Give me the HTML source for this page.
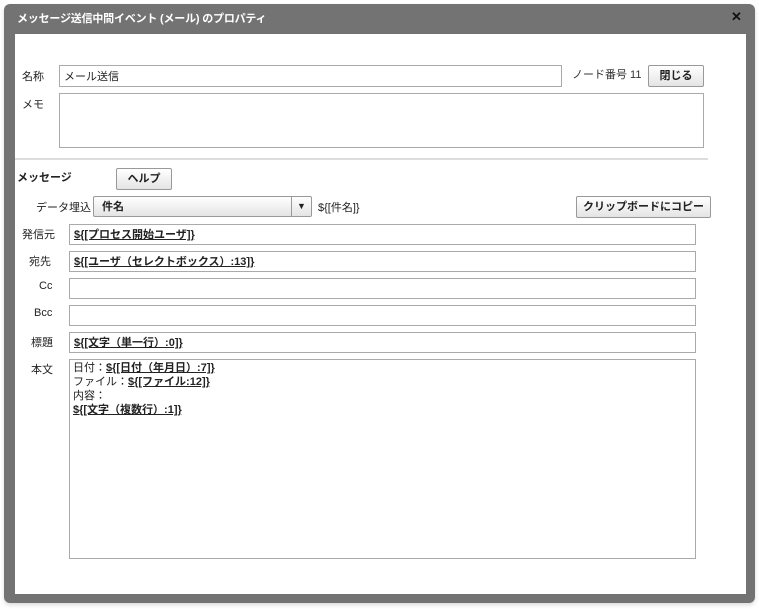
<!DOCTYPE html>
<html><head><meta charset="utf-8"><style>
body{margin:0;width:759px;height:609px;background:#fff;position:relative;overflow:hidden;font-family:"Liberation Sans","Noto Sans CJK JP",sans-serif;font-size:11px;color:#222}
.a{position:absolute}
.frame{left:4px;top:4px;width:751px;height:599px;background:#737373;border-radius:6px;box-shadow:0 2px 4px rgba(0,0,0,.15)}
.title{left:17px;top:10px;color:#fff;font-weight:bold;font-size:11px;letter-spacing:-0.2px}
.x{left:731px;top:9px;color:#111;font-weight:bold;font-size:13px}
.inner{left:15px;top:34px;width:731px;height:560px;background:#fff}
.box{border:1px solid #aaa;background:#fff;box-sizing:border-box}
.btn{border:1px solid #999;border-radius:2px;background:linear-gradient(#fff,#e4e4e4);box-sizing:border-box;text-align:center;font-weight:bold;font-size:11px}
.v{font-weight:bold;text-decoration:underline;font-size:11px;color:#222}
.lbl{font-size:11px}
</style></head><body>
<div class="a frame"></div>
<div class="a title">メッセージ送信中間イベント (メール) のプロパティ</div>
<div class="a x">✕</div>
<div class="a inner"></div>
<div class="a lbl" style="left:22px;top:68px">名称</div>
<div class="a box" style="left:59px;top:65px;width:503px;height:22px;padding:2px 4px">メール送信</div>
<div class="a lbl" style="left:572px;top:66px;color:#333">ノード番号 11</div>
<div class="a btn" style="left:648px;top:65px;width:56px;height:22px;line-height:20px">閉じる</div>
<div class="a lbl" style="left:22px;top:96px">メモ</div>
<div class="a box" style="left:59px;top:93px;width:645px;height:55px"></div>
<div class="a" style="left:15px;top:158px;width:693px;height:2px;background:#ddd"></div>
<div class="a" style="left:17px;top:169px;font-weight:bold">メッセージ</div>
<div class="a btn" style="left:116px;top:168px;width:56px;height:22px;line-height:20px">ヘルプ</div>
<div class="a lbl" style="left:36px;top:199px">データ埋込</div>
<div class="a btn" style="left:93px;top:196px;width:219px;height:21px;text-align:left;padding-left:8px;line-height:20px">件名</div>
<div class="a" style="left:291px;top:197px;width:1px;height:19px;background:#999"></div>
<div class="a" style="left:297px;top:201px;font-size:9px">▼</div>
<div class="a lbl" style="left:318px;top:199px">${[件名]}</div>
<div class="a btn" style="left:576px;top:196px;width:135px;height:22px;line-height:20px">クリップボードにコピー</div>
<div class="a lbl" style="left:22px;top:226px">発信元</div>
<div class="a box" style="left:69px;top:224px;width:627px;height:21px;padding:1px 4px"><span class="v">${[プロセス開始ユーザ]}</span></div>
<div class="a lbl" style="left:29px;top:253px">宛先</div>
<div class="a box" style="left:69px;top:251px;width:627px;height:21px;padding:1px 4px"><span class="v">${[ユーザ（セレクトボックス）:13]}</span></div>
<div class="a lbl" style="left:39px;top:280px">Cc</div>
<div class="a box" style="left:69px;top:278px;width:627px;height:21px"></div>
<div class="a lbl" style="left:34px;top:307px">Bcc</div>
<div class="a box" style="left:69px;top:305px;width:627px;height:21px"></div>
<div class="a lbl" style="left:31px;top:334px">標題</div>
<div class="a box" style="left:69px;top:332px;width:627px;height:21px;padding:1px 4px"><span class="v">${[文字（単一行）:0]}</span></div>
<div class="a lbl" style="left:31px;top:361px">本文</div>
<div class="a box" style="left:69px;top:359px;width:627px;height:200px;padding:1px 3px;line-height:14px">日付：<span class="v">${[日付（年月日）:7]}</span><br>ファイル：<span class="v">${[ファイル:12]}</span><br>内容：<br><span class="v">${[文字（複数行）:1]}</span></div>
</body></html>
